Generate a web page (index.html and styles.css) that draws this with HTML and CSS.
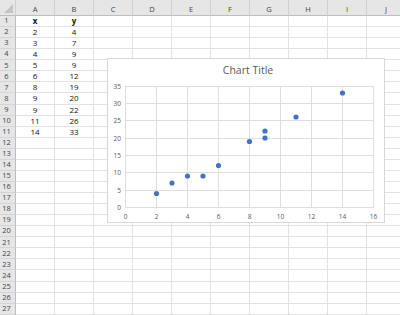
FILE: index.html
```html
<!DOCTYPE html>
<html>
<head>
<meta charset="utf-8">
<link rel="stylesheet" href="styles.css">
</head>
<body>
<div class="sheet">
  <div class="corner"></div><div class="ch">A</div><div class="ch">B</div><div class="ch">C</div><div class="ch">D</div><div class="ch">E</div><div class="ch">F</div><div class="ch">G</div><div class="ch">H</div><div class="ch">I</div><div class="ch">J</div>
  <div class="rh">1</div><div class="c b">x</div><div class="c b">y</div><div class="c"></div><div class="c"></div><div class="c"></div><div class="c"></div><div class="c"></div><div class="c"></div><div class="c"></div><div class="c"></div>
  <div class="rh">2</div><div class="c">2</div><div class="c">4</div><div class="c"></div><div class="c"></div><div class="c"></div><div class="c"></div><div class="c"></div><div class="c"></div><div class="c"></div><div class="c"></div>
  <div class="rh">3</div><div class="c">3</div><div class="c">7</div><div class="c"></div><div class="c"></div><div class="c"></div><div class="c"></div><div class="c"></div><div class="c"></div><div class="c"></div><div class="c"></div>
  <div class="rh">4</div><div class="c">4</div><div class="c">9</div><div class="c"></div><div class="c"></div><div class="c"></div><div class="c"></div><div class="c"></div><div class="c"></div><div class="c"></div><div class="c"></div>
  <div class="rh">5</div><div class="c">5</div><div class="c">9</div><div class="c"></div><div class="c"></div><div class="c"></div><div class="c"></div><div class="c"></div><div class="c"></div><div class="c"></div><div class="c"></div>
  <div class="rh">6</div><div class="c">6</div><div class="c">12</div><div class="c"></div><div class="c"></div><div class="c"></div><div class="c"></div><div class="c"></div><div class="c"></div><div class="c"></div><div class="c"></div>
  <div class="rh">7</div><div class="c">8</div><div class="c">19</div><div class="c"></div><div class="c"></div><div class="c"></div><div class="c"></div><div class="c"></div><div class="c"></div><div class="c"></div><div class="c"></div>
  <div class="rh">8</div><div class="c">9</div><div class="c">20</div><div class="c"></div><div class="c"></div><div class="c"></div><div class="c"></div><div class="c"></div><div class="c"></div><div class="c"></div><div class="c"></div>
  <div class="rh">9</div><div class="c">9</div><div class="c">22</div><div class="c"></div><div class="c"></div><div class="c"></div><div class="c"></div><div class="c"></div><div class="c"></div><div class="c"></div><div class="c"></div>
  <div class="rh">10</div><div class="c">11</div><div class="c">26</div><div class="c"></div><div class="c"></div><div class="c"></div><div class="c"></div><div class="c"></div><div class="c"></div><div class="c"></div><div class="c"></div>
  <div class="rh">11</div><div class="c">14</div><div class="c">33</div><div class="c"></div><div class="c"></div><div class="c"></div><div class="c"></div><div class="c"></div><div class="c"></div><div class="c"></div><div class="c"></div>
  <div class="rh">12</div><div class="c"></div><div class="c"></div><div class="c"></div><div class="c"></div><div class="c"></div><div class="c"></div><div class="c"></div><div class="c"></div><div class="c"></div><div class="c"></div>
  <div class="rh">13</div><div class="c"></div><div class="c"></div><div class="c"></div><div class="c"></div><div class="c"></div><div class="c"></div><div class="c"></div><div class="c"></div><div class="c"></div><div class="c"></div>
  <div class="rh">14</div><div class="c"></div><div class="c"></div><div class="c"></div><div class="c"></div><div class="c"></div><div class="c"></div><div class="c"></div><div class="c"></div><div class="c"></div><div class="c"></div>
  <div class="rh">15</div><div class="c"></div><div class="c"></div><div class="c"></div><div class="c"></div><div class="c"></div><div class="c"></div><div class="c"></div><div class="c"></div><div class="c"></div><div class="c"></div>
  <div class="rh">16</div><div class="c"></div><div class="c"></div><div class="c"></div><div class="c"></div><div class="c"></div><div class="c"></div><div class="c"></div><div class="c"></div><div class="c"></div><div class="c"></div>
  <div class="rh">17</div><div class="c"></div><div class="c"></div><div class="c"></div><div class="c"></div><div class="c"></div><div class="c"></div><div class="c"></div><div class="c"></div><div class="c"></div><div class="c"></div>
  <div class="rh">18</div><div class="c"></div><div class="c"></div><div class="c"></div><div class="c"></div><div class="c"></div><div class="c"></div><div class="c"></div><div class="c"></div><div class="c"></div><div class="c"></div>
  <div class="rh">19</div><div class="c"></div><div class="c"></div><div class="c"></div><div class="c"></div><div class="c"></div><div class="c"></div><div class="c"></div><div class="c"></div><div class="c"></div><div class="c"></div>
  <div class="rh">20</div><div class="c"></div><div class="c"></div><div class="c"></div><div class="c"></div><div class="c"></div><div class="c"></div><div class="c"></div><div class="c"></div><div class="c"></div><div class="c"></div>
  <div class="rh">21</div><div class="c"></div><div class="c"></div><div class="c"></div><div class="c"></div><div class="c"></div><div class="c"></div><div class="c"></div><div class="c"></div><div class="c"></div><div class="c"></div>
  <div class="rh">22</div><div class="c"></div><div class="c"></div><div class="c"></div><div class="c"></div><div class="c"></div><div class="c"></div><div class="c"></div><div class="c"></div><div class="c"></div><div class="c"></div>
  <div class="rh">23</div><div class="c"></div><div class="c"></div><div class="c"></div><div class="c"></div><div class="c"></div><div class="c"></div><div class="c"></div><div class="c"></div><div class="c"></div><div class="c"></div>
  <div class="rh">24</div><div class="c"></div><div class="c"></div><div class="c"></div><div class="c"></div><div class="c"></div><div class="c"></div><div class="c"></div><div class="c"></div><div class="c"></div><div class="c"></div>
  <div class="rh">25</div><div class="c"></div><div class="c"></div><div class="c"></div><div class="c"></div><div class="c"></div><div class="c"></div><div class="c"></div><div class="c"></div><div class="c"></div><div class="c"></div>
  <div class="rh">26</div><div class="c"></div><div class="c"></div><div class="c"></div><div class="c"></div><div class="c"></div><div class="c"></div><div class="c"></div><div class="c"></div><div class="c"></div><div class="c"></div>
  <div class="rh">27</div><div class="c"></div><div class="c"></div><div class="c"></div><div class="c"></div><div class="c"></div><div class="c"></div><div class="c"></div><div class="c"></div><div class="c"></div><div class="c"></div>

  <div class="chart">
    <div class="chart-title">Chart Title</div>
    <svg class="plot" width="276" height="143" viewBox="0 0 276 143">
      <g class="grid">
        <line x1="17" y1="7.5" x2="265" y2="7.5"/>
        <line x1="17" y1="24.5" x2="265" y2="24.5"/>
        <line x1="17" y1="41.5" x2="265" y2="41.5"/>
        <line x1="17" y1="59.5" x2="265" y2="59.5"/>
        <line x1="17" y1="76.5" x2="265" y2="76.5"/>
        <line x1="17" y1="93.5" x2="265" y2="93.5"/>
        <line x1="17" y1="111.5" x2="265" y2="111.5"/>
        <line x1="17" y1="128.5" x2="265" y2="128.5"/>
        <line x1="17.5" y1="7" x2="17.5" y2="129"/>
        <line x1="48.5" y1="7" x2="48.5" y2="129"/>
        <line x1="79.5" y1="7" x2="79.5" y2="129"/>
        <line x1="110.5" y1="7" x2="110.5" y2="129"/>
        <line x1="141.5" y1="7" x2="141.5" y2="129"/>
        <line x1="172.5" y1="7" x2="172.5" y2="129"/>
        <line x1="203.5" y1="7" x2="203.5" y2="129"/>
        <line x1="234.5" y1="7" x2="234.5" y2="129"/>
        <line x1="265.5" y1="7" x2="265.5" y2="129"/>
      </g>
      <g class="ylab">
        <text x="13" y="10">35</text>
        <text x="13" y="27">30</text>
        <text x="13" y="44">25</text>
        <text x="13" y="62">20</text>
        <text x="13" y="79">15</text>
        <text x="13" y="96">10</text>
        <text x="13" y="114">5</text>
        <text x="13" y="131">0</text>
      </g>
      <g class="xlab">
        <text x="17.5" y="140">0</text>
        <text x="48.5" y="140">2</text>
        <text x="79.5" y="140">4</text>
        <text x="110.5" y="140">6</text>
        <text x="141.5" y="140">8</text>
        <text x="172.5" y="140">10</text>
        <text x="203.5" y="140">12</text>
        <text x="234.5" y="140">14</text>
        <text x="265.5" y="140">16</text>
      </g>
      <g class="pts">
        <circle cx="48.5" cy="114.5" r="2.6"/>
        <circle cx="64" cy="104" r="2.6"/>
        <circle cx="79.5" cy="97" r="2.6"/>
        <circle cx="95" cy="97" r="2.6"/>
        <circle cx="110.5" cy="86.5" r="2.6"/>
        <circle cx="141.5" cy="62.5" r="2.6"/>
        <circle cx="157" cy="59" r="2.6"/>
        <circle cx="157" cy="52" r="2.6"/>
        <circle cx="188" cy="38" r="2.6"/>
        <circle cx="234.5" cy="14" r="2.6"/>
      </g>
    </svg>
  </div>
</div>
</body>
</html>
```
FILE: styles.css
```css
html, body {
  margin: 0;
  padding: 0;
  background: #ffffff;
  overflow: hidden;
}
body {
  width: 400px;
  height: 315px;
}
.sheet {
  position: relative;
  display: grid;
  grid-template-columns: 16px repeat(10, 39px);
  grid-template-rows: 16px repeat(27, 11.07px);
  font-family: "Open Sans", "Liberation Sans", sans-serif;
  font-size: 7.5px;
  color: #111;
}
.corner {
  position: relative;
  background: #e6e6e6;
  border-right: 1px solid #d0d0d0;
  border-bottom: 1px solid #bdbdbd;
  box-sizing: border-box;
}
.corner::after {
  content: "";
  position: absolute;
  right: 2px;
  bottom: 2px;
  width: 0;
  height: 0;
  border-left: 9px solid transparent;
  border-bottom: 9px solid #c4c4c4;
}
.ch {
  background: #e6e6e6;
  border-right: 1px solid #d0d0d0;
  border-bottom: 1px solid #bdbdbd;
  box-sizing: border-box;
  display: flex;
  align-items: flex-end;
  justify-content: center;
  padding-bottom: 2px;
  color: #444;
  line-height: 1;
}
.rh {
  background: #e6e6e6;
  border-right: 1px solid #bdbdbd;
  border-bottom: 1px solid #d4d4d4;
  box-sizing: border-box;
  display: flex;
  align-items: center;
  justify-content: center;
  padding-right: 2px;
  color: #444;
  line-height: 1;
}
.c {
  border-right: 1px solid #e2e2e2;
  border-bottom: 1px solid #e2e2e2;
  box-sizing: border-box;
  display: flex;
  align-items: center;
  justify-content: center;
  line-height: 1;
  font-size: 8px;
  overflow: hidden;
}
.b {
  font-weight: bold;
}
.chart {
  position: absolute;
  left: 107px;
  top: 58px;
  width: 278px;
  height: 165px;
  box-sizing: border-box;
  border: 1px solid #d9d9d9;
  background: #ffffff;
  display: flex;
  flex-direction: column;
}
.chart-title {
  height: 20px;
  display: flex;
  align-items: center;
  justify-content: center;
  font-family: "Open Sans", "Liberation Sans", sans-serif;
  font-size: 10.5px;
  color: #595959;
  padding-left: 4px;
  padding-top: 2px;
  box-sizing: border-box;
}
.plot {
  display: block;
}
.grid line {
  stroke: #dedede;
  stroke-width: 1;
}
.ylab text {
  font-family: "Open Sans", "Liberation Sans", sans-serif;
  font-size: 6.5px;
  fill: #595959;
  text-anchor: end;
}
.xlab text {
  font-family: "Open Sans", "Liberation Sans", sans-serif;
  font-size: 6.5px;
  fill: #595959;
  text-anchor: middle;
}
.pts circle {
  fill: #4472c4;
}
```
